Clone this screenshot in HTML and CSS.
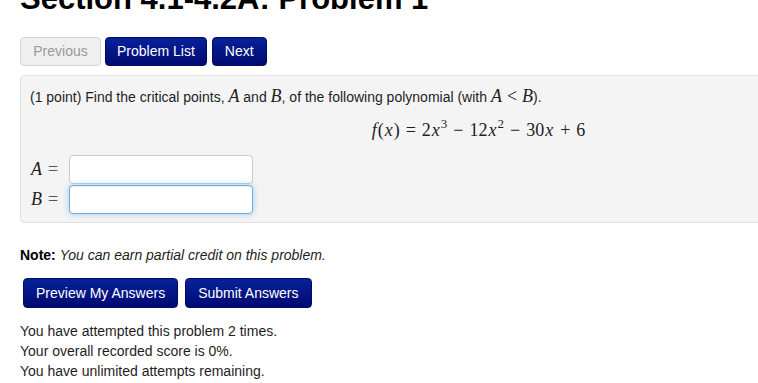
FILE: index.html
```html
<!DOCTYPE html>
<html>
<head>
<meta charset="utf-8">
<link rel="stylesheet" href="styles.css">
</head>
<body>
<div class="page">
  <h2 class="title">Section 4.1-4.2A: Problem 1</h2>
  <div class="nav">
    <span class="btn btn-disabled">Previous</span>
    <span class="btn btn-primary">Problem List</span>
    <span class="btn btn-primary btn-next">Next</span>
  </div>
  <div class="problem">
    <p class="statement">(1 point) Find the critical points, <span class="mi">A</span> and <span class="mi">B</span>, of the following polynomial (with <span class="mi">A</span><span class="mo">&lt;</span><span class="mi">B</span>).</p>
    <div class="formula"><span class="mi">f</span><span class="mn">(</span><span class="mi">x</span><span class="mn">)</span><span class="mo">=</span><span class="mn">2</span><span class="mi">x</span><sup class="sup">3</sup><span class="mo">−</span><span class="mn">12</span><span class="mi">x</span><sup class="sup">2</sup><span class="mo">−</span><span class="mn">30</span><span class="mi">x</span><span class="mo">+</span><span class="mn">6</span></div>
    <div class="answers">
      <div class="answer-row"><span class="label"><span class="mi">A</span><span class="eq">=</span></span><input class="field" type="text"></div>
      <div class="answer-row"><span class="label"><span class="mi">B</span><span class="eq">=</span></span><input class="field field-focus" type="text"></div>
    </div>
  </div>
  <p class="note"><b>Note:</b> <i>You can earn partial credit on this problem.</i></p>
  <div class="submit">
    <span class="btn btn-primary btn-wide">Preview My Answers</span>
    <span class="btn btn-primary btn-wide">Submit Answers</span>
  </div>
  <div class="status">
    <div>You have attempted this problem 2 times.</div>
    <div>Your overall recorded score is 0%.</div>
    <div>You have unlimited attempts remaining.</div>
  </div>
</div>
</body>
</html>
```
FILE: styles.css
```css
html { overflow: hidden; }
body {
  margin: 0;
  background: #fff;
  font-family: "Liberation Sans", Arial, sans-serif;
  color: #1e1e1e;
  font-size: 14px;
}
.page {
  padding-left: 20px;
  width: 916px;
}
.title {
  font-size: 31px;
  line-height: 36px;
  font-weight: bold;
  color: #000;
  margin: -19px 0 0 0;
  height: 36px;
  white-space: nowrap;
}
.nav {
  display: flex;
  gap: 4px;
  margin-top: 20px;
}
.btn {
  display: inline-block;
  box-sizing: border-box;
  height: 29px;
  line-height: 27px;
  padding: 0 11px;
  font-size: 14px;
  border-radius: 4px;
  border: 1px solid;
  white-space: nowrap;
}
.btn-next {
  margin-left: 1px;
  padding: 0 12px;
}
.btn-disabled {
  color: #999;
  background: #efefef;
  border-color: #d6d6d6;
  width: 81px;
  text-align: center;
}
.btn-primary {
  color: #fff;
  background: linear-gradient(to bottom, #08219a, #000a72);
  border-color: #000c5e;
}
.problem {
  margin-top: 9px;
  box-sizing: border-box;
  height: 148px;
  background: #f4f4f4;
  border: 1px solid #e2e2e2;
  border-radius: 4px;
  padding: 0 9px;
}
.statement {
  margin: 10px 0 0 0;
  line-height: 20px;
  font-size: 14px;
}
.mi {
  font-family: "Liberation Serif", "Times New Roman", serif;
  font-style: italic;
  font-size: 18px;
}
.mn {
  font-family: "Liberation Serif", "Times New Roman", serif;
  font-size: 18px;
}
.mo {
  font-family: "Liberation Serif", "Times New Roman", serif;
  font-size: 18px;
  padding: 0 5px;
}
.sup {
  font-family: "Liberation Serif", "Times New Roman", serif;
  font-size: 13px;
  vertical-align: 8px;
  line-height: 0;
}
.formula {
  text-align: center;
  margin-top: 13px;
  line-height: 20px;
  white-space: nowrap;
}
.formula .mi {
  padding: 0 1px;
}
.formula .mo {
  padding: 0 6px;
}
.answers {
  margin-top: 14px;
  display: flex;
  flex-direction: column;
  gap: 1px;
}
.answer-row {
  display: flex;
  align-items: center;
}
.label {
  width: 39px;
  display: flex;
  align-items: center;
  padding-left: 1px;
  box-sizing: border-box;
}
.eq {
  font-family: "Liberation Serif", "Times New Roman", serif;
  font-size: 18px;
  color: #555;
  margin-left: 6px;
}
.field {
  box-sizing: border-box;
  width: 184px;
  height: 29px;
  border: 1px solid #ccc;
  border-radius: 4px;
  background: #fff;
  margin: 0;
  padding: 0 6px;
  outline: none;
}
.field-focus {
  border-color: #66afe9;
  box-shadow: inset 0 1px 1px rgba(0,0,0,0.075), 0 0 6px rgba(102,175,233,0.6);
}
.note {
  margin: 22px 0 0 0;
  line-height: 20px;
  font-size: 14px;
}
.note b { color: #000; }
.submit {
  display: flex;
  gap: 7px;
  margin-top: 13px;
  padding-left: 3px;
}
.btn-wide {
  height: 30px;
  line-height: 28px;
  padding: 0 12px;
}
.status {
  margin-top: 13px;
  line-height: 20px;
  font-size: 14px;
}
```
